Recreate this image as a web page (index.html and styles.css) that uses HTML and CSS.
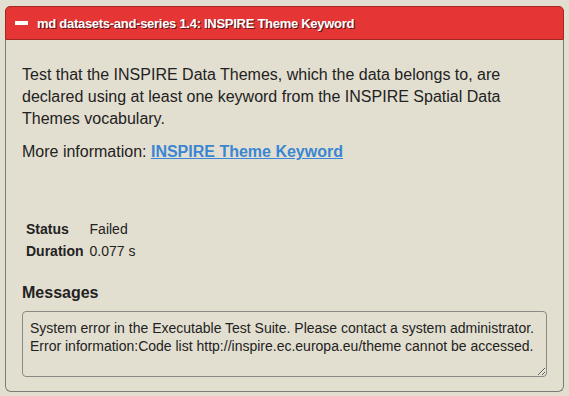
FILE: index.html
```html
<!DOCTYPE html>
<html lang="en">
<head>
<meta charset="UTF-8" />
<meta name="viewport" content="width=device-width, initial-scale=1" />
<title>Test case</title>
<link rel="stylesheet" href="styles.css">
</head>
<body>
  <div class="collapsible">
    <div class="kopf">
      <span class="minus"></span>
      <span class="titel">md datasets-and-series 1.4: INSPIRE Theme Keyword</span>
    </div>
    <div class="inhalt">
      <p class="beschreibung">Test that the INSPIRE Data Themes, which the data belongs to, are declared using at least one keyword from the INSPIRE Spatial Data Themes vocabulary.</p>
      <p class="mehr">More information: <a href="#">INSPIRE Theme Keyword</a></p>
      <table class="info">
        <tr><th>Status</th><td>Failed</td></tr>
        <tr><th>Duration</th><td>0.077 s</td></tr>
      </table>
      <h3>Messages</h3>
      <textarea class="meldungen" readonly>System error in the Executable Test Suite. Please contact a system administrator. Error information:Code list http://inspire.ec.europa.eu/theme cannot be accessed.</textarea>
    </div>
  </div>
</body>
</html>
```

FILE: styles.css
```css
body {
  margin: 0;
  padding: 6px 5px 5px;
  background: #e3dfd0;
  color: #222;
  font-family: 'Liberation Sans', Arial, sans-serif;
}
.collapsible {
  width: 559px;
}
.kopf {
  display: flex;
  align-items: center;
  height: 32px;
  background: #e53535;
  border: 1px solid #a3281f;
  border-radius: 5px 5px 0 0;
  color: #fff;
  font-weight: bold;
  font-size: 13px;
  text-shadow: 1px 1px 0 #5a1a1a;
}
.minus {
  width: 13px;
  height: 4px;
  background: #fff;
  margin: 0 9px 0 9px;
}
.titel {
  letter-spacing: -0.28px;
}
.inhalt {
  border: 1px solid #7c7c76;
  border-top: none;
  border-radius: 0 0 6px 6px;
  padding: 24px 16px 14px;
}
.beschreibung {
  margin: 0;
  max-width: 500px;
  font-size: 16px;
  line-height: 22px;
}
.mehr {
  margin: 13px 0 0;
  font-size: 16px;
}
.mehr a {
  color: #3a86d2;
  font-weight: bold;
}
.info {
  margin-top: 57px;
  border-collapse: collapse;
  font-size: 14px;
}
.info th {
  text-align: left;
  padding: 3px 6px 3px 4px;
}
.info td {
  padding: 3px 0;
}
h3 {
  margin: 22px 0 9px;
  font-size: 16px;
}
.meldungen {
  display: block;
  box-sizing: border-box;
  width: 525px;
  height: 66px;
  margin: 0;
  padding: 7px 7px;
  background: #e3dfd0;
  border: 1px solid #8a8a84;
  border-radius: 4px;
  color: #222;
  font-family: 'Liberation Sans', Arial, sans-serif;
  font-size: 14px;
  line-height: 18px;
  resize: vertical;
}
```
